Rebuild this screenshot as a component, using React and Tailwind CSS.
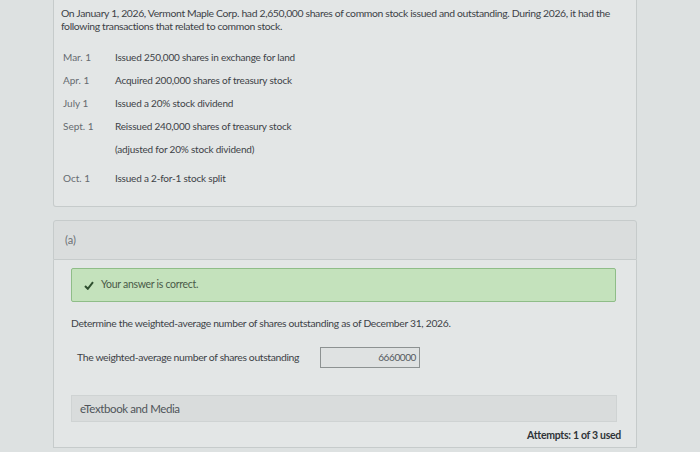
import React from 'react';

const transactions = [
  ['Mar. 1', 'Issued 250,000 shares in exchange for land'],
  ['Apr. 1', 'Acquired 200,000 shares of treasury stock'],
  ['July 1', 'Issued a 20% stock dividend'],
  ['Sept. 1', 'Reissued 240,000 shares of treasury stock'],
  ['', '(adjusted for 20% stock dividend)'],
  ['Oct. 1', 'Issued a 2-for-1 stock split'],
];

export default function App() {
  return (
    <div className="min-h-[452px] bg-[#dde1e1] font-['Lato',sans-serif] text-[#3d4247]">
      <div className="ml-[53px] w-[584px]">
        {/* question */}
        <div className="h-[207px] rounded-b-[3px] border border-t-0 border-[#c6cbcb] bg-[#e3e6e6] px-[7px] pt-[7px]">
          <p className="text-[10.4px] leading-[13px] tracking-[-0.35px]">
            On January 1, 2026, Vermont Maple Corp. had 2,650,000 shares of common stock issued and outstanding. During 2026, it had the
            following transactions that related to common stock.
          </p>
          <div className="mt-[17px] flex flex-col gap-[9px] pl-[2px] text-[10px] leading-[14px]">
            {transactions.map(([date, text], i) => (
              <div key={i} className={`flex ${i === 5 ? 'mt-[6px]' : ''}`}>
                <span className="w-[52px] text-[#666b70]">{date}</span>
                <span className="tracking-[-0.2px]">{text}</span>
              </div>
            ))}
          </div>
        </div>

        {/* part (a) header */}
        <div className="mt-[13px] flex h-[40px] items-center rounded-t-[3px] border border-[#c6cbcb] bg-[#dadddd] px-[11px]">
          <span className="text-[11px] text-[#6b7075]">(a)</span>
        </div>

        {/* part (a) body */}
        <div className="h-[188px] border border-t-0 border-[#c6cbcb] bg-[#e3e6e6] pt-[8px] pl-[17px]">
          <div className="flex h-[34px] w-[545px] items-center rounded-[2px] border border-[#8fbd88] bg-[#c4e2bc] pl-[12px]">
            <svg width="10" height="9" viewBox="0 0 10 9" className="mr-[7px]">
              <path d="M1 5 L3.8 7.8 L9 1.2" fill="none" stroke="#2f4f2f" strokeWidth="2" />
            </svg>
            <span className="text-[10.5px] tracking-[-0.3px] text-[#4a5a48]">Your answer is correct.</span>
          </div>

          <p className="mt-[15px] text-[10.3px] leading-[12px] tracking-[-0.3px]">
            Determine the weighted-average number of shares outstanding as of December 31, 2026.
          </p>

          <div className="mt-[18px] flex items-center pl-[6px]">
            <span className="w-[243px] text-[10.4px] tracking-[-0.35px]">
              The weighted-average number of shares outstanding
            </span>
            <div className="flex h-[21px] w-[100px] items-center justify-end border border-[#8d9292] bg-[#dfe2e2] pr-[3px] text-[10px] tracking-[-0.4px] text-[#555a5f]">
              6660000
            </div>
          </div>

          <div className="mt-[27px] flex h-[27px] w-[546px] items-center border border-[#cfd3d3] bg-[#d9dcdc] pl-[8px] text-[11.5px] tracking-[-0.4px] text-[#50555a]">
            eTextbook and Media
          </div>

          <div className="mt-[6px] flex w-[550px] justify-end text-[10.5px] font-bold tracking-[-0.3px] text-[#2f3438]">
            Attempts: 1 of 3 used
          </div>
        </div>
      </div>
    </div>
  );
}
